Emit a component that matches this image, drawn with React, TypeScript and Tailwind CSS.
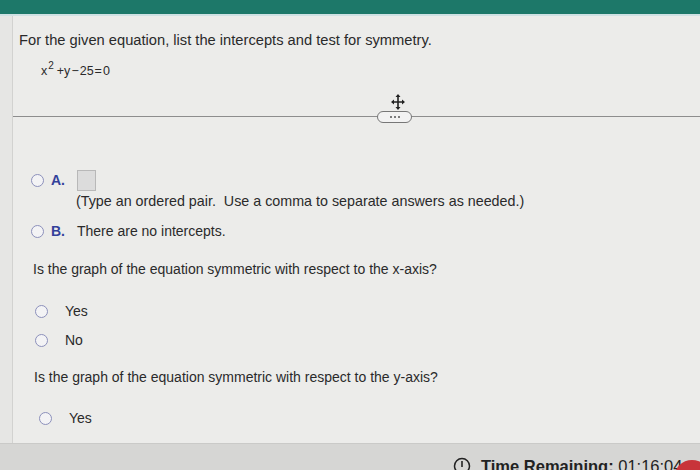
import React from 'react';

const Radio = () => (
  <span className="inline-block w-[13px] h-[13px] rounded-full border-[1.5px] border-[#8c90bb] bg-[#f3f3f5] shrink-0" />
);

export default function App() {
  return (
    <div
      className="w-[700px] h-[470px] overflow-hidden bg-[#e6e6e4] text-[#2a2a2a] flex flex-col"
      style={{ fontFamily: '"Liberation Sans", Arial, sans-serif' }}
    >
      {/* Top bar */}
      <div className="h-[14px] bg-[#1d7869] shrink-0" />
      <div className="h-[2px] bg-[#cfe1e3] shrink-0" />

      {/* Question panel */}
      <div className="flex-1 ml-[12px] border-l border-[#d2d2d0] bg-[#ececea] flex flex-col">
        <div className="h-[14px]" />
        <div className="h-[20px] flex items-center pl-[6px] text-[14.7px]">
          For the given equation, list the intercepts and test for symmetry.
        </div>

        <div className="h-[13px]" />
        <div className="h-[20px] flex items-end pl-[28px] text-[12.5px] pb-[2px]">
          <span>x</span>
          <span className="text-[10px] relative -top-[8px] ml-[1px]">2</span>
          <span className="ml-[3px]">+y</span>
          <span className="ml-[1px]">−</span>
          <span className="ml-[1px]">25</span>
          <span className="ml-[1px]">=</span>
          <span className="ml-[1px]">0</span>
        </div>

        {/* Divider with pill */}
        <div className="relative h-[30px] mt-[12px]">
          <div className="absolute left-0 right-0 top-[21px] h-[1px] bg-[#8d8d8d]" />
          <div className="absolute left-[364px] top-[16px] w-[35px] h-[12px] rounded-full border border-[#777] bg-[#f2f2f2] flex items-center justify-center gap-[2px]">
            <span className="w-[2px] h-[2px] bg-[#555] rounded-full" />
            <span className="w-[2px] h-[2px] bg-[#555] rounded-full" />
            <span className="w-[2px] h-[2px] bg-[#555] rounded-full" />
          </div>
          <svg className="absolute left-[378px] top-[-1px]" width="14" height="16" viewBox="0 0 14 16">
            <path d="M7 1 L7 15 M1 8 L13 8" stroke="#222" strokeWidth="1.6" />
            <path d="M7 0 L4.5 3 L9.5 3 Z M7 16 L4.5 13 L9.5 13 Z M0 8 L3 5.5 L3 10.5 Z M14 8 L11 5.5 L11 10.5 Z" fill="#222" />
          </svg>
        </div>

        {/* Option A */}
        <div className="h-[22px] mt-[44px] flex items-center pl-[18px] text-[14px]">
          <Radio />
          <span className="ml-[7px] w-[26px] font-bold text-[#33419a]">A.</span>
          <span className="inline-block w-[19px] h-[21px] bg-[#dcdcdc] border border-[#b8b8b8]" />
        </div>
        <div className="h-[20px] mt-[1px] flex items-center pl-[63px] text-[14.3px]">
          (Type an ordered pair.&nbsp; Use a comma to separate answers as needed.)
        </div>

        {/* Option B */}
        <div className="h-[20px] mt-[9px] flex items-center pl-[18px] text-[14px]">
          <Radio />
          <span className="ml-[7px] w-[26px] font-bold text-[#33419a]">B.</span>
          <span>There are no intercepts.</span>
        </div>

        <div className="h-[20px] mt-[18px] flex items-center pl-[20px] text-[14px]">
          Is the graph of the equation symmetric with respect to the x-axis?
        </div>

        <div className="h-[20px] mt-[22px] flex items-center pl-[22px] text-[14px]">
          <Radio />
          <span className="ml-[17px]">Yes</span>
        </div>
        <div className="h-[20px] mt-[9px] flex items-center pl-[22px] text-[14px]">
          <Radio />
          <span className="ml-[17px]">No</span>
        </div>

        <div className="h-[20px] mt-[17px] flex items-center pl-[21px] text-[14px]">
          Is the graph of the equation symmetric with respect to the y-axis?
        </div>

        <div className="h-[20px] mt-[21px] flex items-center pl-[26px] text-[14px]">
          <Radio />
          <span className="ml-[17px]">Yes</span>
        </div>
      </div>

      {/* Footer */}
      <div className="relative h-[27px] shrink-0 bg-[#d6d6d4] border-t border-[#cacac8] flex items-start pt-[13px]">
        <div className="ml-[453px] flex items-center gap-[10px] shrink-0 whitespace-nowrap">
          <svg width="18" height="18" viewBox="0 0 18 18" className="shrink-0">
            <circle cx="9" cy="9" r="7.5" fill="none" stroke="#222" strokeWidth="1.5" />
            <path d="M9 4 L9 10" stroke="#222" strokeWidth="1.6" />
          </svg>
          <span className="text-[16.5px] leading-[18px] text-[#222]">
            <span className="font-bold">Time Remaining:</span> 01:16:04
          </span>
        </div>
        <div className="absolute right-[-10px] top-[16px] w-[36px] h-[36px] rounded-full bg-[#c8343a]" />
      </div>
    </div>
  );
}
